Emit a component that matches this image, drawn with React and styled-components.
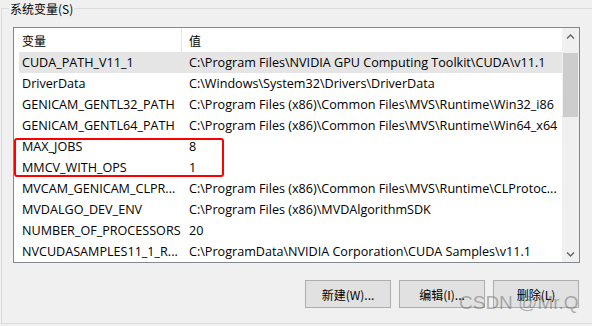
import styled, { createGlobalStyle } from 'styled-components';

const GlobalStyle = createGlobalStyle`
  html, body {
    margin: 0;
    padding: 0;
    background: #f0f0f0;
  }
  body {
    font-family: 'Open Sans', 'Noto Sans CJK SC', sans-serif;
    font-size: 12px;
    color: #000;
  }
`;

const Page = styled.div`
  position: relative;
  width: 592px;
  height: 326px;
  overflow: hidden;
  background: #f0f0f0;
`;

const Group = styled.fieldset`
  margin: 0 0 0 1px;
  padding: 10px 20px 15px 11px;
  width: 567px;
  border: 1px solid #dcdcdc;
  border-radius: 0;
`;

const Legend = styled.legend`
  margin-left: -4px;
  padding: 0 1px;
  line-height: 17px;
  font-family: 'Noto Sans CJK SC', sans-serif;
`;

const ListBox = styled.div`
  position: relative;
  display: grid;
  grid-template-columns: 1fr 17px;
  height: 234px;
  border: 1px solid #828790;
  background: #fff;
`;

const Content = styled.div`
  padding-left: 5px;
  overflow: hidden;
`;

const Header = styled.div`
  display: grid;
  grid-template-columns: 163px 1fr;
  height: 24px;
`;

const HeadCell = styled.div`
  display: flex;
  align-items: center;
  padding-left: ${p => (p.$first ? '3px' : '7px')};
  border-right: ${p => (p.$first ? '1px solid #e5e5e5' : 'none')};
  font-family: 'Noto Sans CJK SC', sans-serif;
`;

const Row = styled.div`
  display: grid;
  grid-template-columns: 163px 1fr;
  height: 21px;
  background: ${p => (p.$selected ? '#e5e5e5' : '#fff')};
`;

const Cell = styled.div`
  display: flex;
  align-items: center;
  padding-left: ${p => (p.$first ? '3px' : '7px')};
  font-size: 12.6px;
  white-space: nowrap;
  overflow: hidden;
`;

const Marker = styled.div`
  position: absolute;
  left: 0;
  top: 110px;
  width: 206px;
  height: 35px;
  border: 2px solid #ff0000;
  border-radius: 3px;
  pointer-events: none;
`;

const ScrollBar = styled.div`
  display: grid;
  grid-template-rows: 17px 1fr 17px;
  background: #f0f0f0;
`;

const Arrow = styled.div`
  display: flex;
  align-items: center;
  justify-content: center;
`;

const Track = styled.div`
  padding: 8px 1px 0;
`;

const Thumb = styled.div`
  height: 64px;
  background: #cdcdcd;
`;

const Buttons = styled.div`
  display: flex;
  justify-content: flex-end;
  gap: 8px;
  margin-top: 17px;
  margin-right: 1px;
`;

const Button = styled.button`
  width: 86px;
  height: 28px;
  padding: 0;
  border: 1px solid #adadad;
  background: #e1e1e1;
  color: #000;
  font-family: 'Noto Sans CJK SC', sans-serif;
  font-size: 12px;
`;

const Watermark = styled.div`
  position: absolute;
  left: 459px;
  top: 293px;
  font-family: 'Liberation Sans', sans-serif;
  font-size: 19px;
  line-height: 19px;
  color: rgba(90, 90, 90, 0.45);
  pointer-events: none;
`;

const Chevron = ({ down }) => (
  <svg width="9" height="6" viewBox="0 0 9 6">
    <path
      d={down ? 'M1 1.5 L4.5 5 L8 1.5' : 'M1 4.5 L4.5 1 L8 4.5'}
      fill="none"
      stroke="#606060"
      strokeWidth="1.3"
    />
  </svg>
);

const vars = [
  ['CUDA_PATH_V11_1', 'C:\\Program Files\\NVIDIA GPU Computing Toolkit\\CUDA\\v11.1'],
  ['DriverData', 'C:\\Windows\\System32\\Drivers\\DriverData'],
  ['GENICAM_GENTL32_PATH', 'C:\\Program Files (x86)\\Common Files\\MVS\\Runtime\\Win32_i86'],
  ['GENICAM_GENTL64_PATH', 'C:\\Program Files (x86)\\Common Files\\MVS\\Runtime\\Win64_x64'],
  ['MAX_JOBS', '8'],
  ['MMCV_WITH_OPS', '1'],
  ['MVCAM_GENICAM_CLPR...', 'C:\\Program Files (x86)\\Common Files\\MVS\\Runtime\\CLProtoc...'],
  ['MVDALGO_DEV_ENV', 'C:\\Program Files (x86)\\MVDAlgorithmSDK'],
  ['NUMBER_OF_PROCESSORS', '20'],
  ['NVCUDASAMPLES11_1_R...', 'C:\\ProgramData\\NVIDIA Corporation\\CUDA Samples\\v11.1'],
];

const App = () => (
  <Page>
    <GlobalStyle />
    <Group>
      <Legend>系统变量(S)</Legend>
      <ListBox>
        <Content>
          <Header>
            <HeadCell $first>变量</HeadCell>
            <HeadCell>值</HeadCell>
          </Header>
          {vars.map(([name, value], i) => (
            <Row key={name} $selected={i === 0}>
              <Cell $first>{name}</Cell>
              <Cell>{value}</Cell>
            </Row>
          ))}
        </Content>
        <ScrollBar>
          <Arrow>
            <Chevron />
          </Arrow>
          <Track>
            <Thumb />
          </Track>
          <Arrow>
            <Chevron down />
          </Arrow>
        </ScrollBar>
        <Marker />
      </ListBox>
      <Buttons>
        <Button>新建(W)...</Button>
        <Button>编辑(I)...</Button>
        <Button>删除(L)</Button>
      </Buttons>
    </Group>
    <Watermark>CSDN @Mr.Q</Watermark>
  </Page>
);

export default App;
